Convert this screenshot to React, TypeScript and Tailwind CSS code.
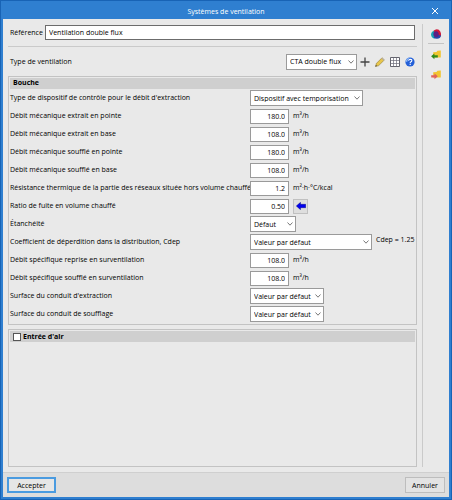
import React, { useState } from 'react';

interface FieldRow {
  id: string;
  label: string;
  kind: 'number' | 'select';
  value: string;
  unit?: string;
  width?: string;
  note?: string;
  reset?: boolean;
}

const rows: FieldRow[] = [
  { id: 'dispositif', label: "Type de dispositif de contrôle pour le débit d'extraction", kind: 'select', value: 'Dispositif avec temporisation', width: 'w-[113px]' },
  { id: 'extrait-pointe', label: 'Débit mécanique extrait en pointe', kind: 'number', value: '180.0', unit: 'm³/h' },
  { id: 'extrait-base', label: 'Débit mécanique extrait en base', kind: 'number', value: '108.0', unit: 'm³/h' },
  { id: 'souffle-pointe', label: 'Débit mécanique soufflé en pointe', kind: 'number', value: '180.0', unit: 'm³/h' },
  { id: 'souffle-base', label: 'Débit mécanique soufflé en base', kind: 'number', value: '108.0', unit: 'm³/h' },
  { id: 'resistance', label: 'Résistance thermique de la partie des réseaux située hors volume chauffé', kind: 'number', value: '1.2', unit: 'm²·h·°C/kcal' },
  { id: 'fuite', label: 'Ratio de fuite en volume chauffé', kind: 'number', value: '0.50', reset: true },
  { id: 'etancheite', label: 'Étanchéité', kind: 'select', value: 'Défaut', width: 'w-[46px]' },
  { id: 'cdep', label: 'Coefficient de déperdition dans la distribution, Cdep', kind: 'select', value: 'Valeur par défaut', width: 'w-[122px]', note: 'Cdep = 1.25' },
  { id: 'reprise', label: 'Débit spécifique reprise en surventilation', kind: 'number', value: '108.0', unit: 'm³/h' },
  { id: 'souffle', label: 'Débit spécifique soufflé en surventilation', kind: 'number', value: '108.0', unit: 'm³/h' },
  { id: 'extraction', label: "Surface du conduit d'extraction", kind: 'select', value: 'Valeur par défaut', width: 'w-[74px]' },
  { id: 'soufflage', label: 'Surface du conduit de soufflage', kind: 'select', value: 'Valeur par défaut', width: 'w-[74px]' },
];

interface SelectBoxProps {
  id: string;
  value: string;
  width?: string;
}

const SelectBox: React.FC<SelectBoxProps> = ({ id, value, width = '' }) => (
  <span className={`relative block shrink-0 ${width}`}>
    <select
      id={id}
      defaultValue={value}
      className="block h-4 w-full appearance-none border border-[#9a9a9a] bg-white pl-[3px] pr-2.5 leading-none"
    >
      <option>{value}</option>
    </select>
    <svg viewBox="0 0 6 4" className="pointer-events-none absolute right-[3px] top-1.5 h-1 w-1.5" fill="none" stroke="#555" strokeWidth="0.8">
      <path d="M0.5 0.5 3 3.2 5.5 0.5" />
    </svg>
  </span>
);

const iconButton = 'flex size-[15px] items-center justify-center';

const App: React.FC = () => {
  const [airInlet, setAirInlet] = useState(false);

  return (
    <div className="flex min-h-screen flex-col border border-[#1863b5] bg-[#2f7fd0] px-0.5 pb-0.5 font-['Open_Sans',sans-serif] text-[7px] leading-[10px] text-black">
      <header className="relative flex h-[18px] items-center justify-center text-white">
        <h1 className="pt-1">Systèmes de ventilation</h1>
        <button type="button" aria-label="Fermer" className="absolute right-2.5 top-1.5">
          <svg viewBox="0 0 8 8" className="size-2" stroke="#fff" strokeWidth="1">
            <path d="M1 1 7 7M7 1 1 7" />
          </svg>
        </button>
      </header>

      <div className="flex flex-1 bg-[#e9e9e9] pb-[5px] pl-[5px] pt-[5px]">
        <main className="flex min-w-0 flex-1 flex-col">
          <div className="flex items-center border-b border-[#cacaca] pb-1.5 pl-0.5 pr-0.5 pt-px">
            <label htmlFor="reference" className="w-[35px]">Référence</label>
            <input
              id="reference"
              defaultValue="Ventilation double flux"
              className="h-[15px] min-w-0 flex-1 border border-[#6c6c6c] bg-white px-[3px]"
            />
          </div>

          <div className="flex h-[29px] items-center pl-0.5">
            <label htmlFor="type" className="flex-1">Type de ventilation</label>
            <SelectBox id="type" value="CTA double flux" width="w-[71px]" />
            <div className="flex">
              <button type="button" aria-label="Ajouter" className={iconButton}>
                <svg viewBox="0 0 10 10" className="size-2.5" stroke="#444" strokeWidth="1.3">
                  <path d="M5 0.5V9.5M0.5 5H9.5" />
                </svg>
              </button>
              <button type="button" aria-label="Modifier" className={iconButton}>
                <svg viewBox="0 0 10 10" className="size-2.5">
                  <path d="M0.5 9.5 1.5 6.3 7 0.8 9.3 3 3.7 8.6Z" fill="#e8c64a" stroke="#8d7a35" strokeWidth="0.6" />
                  <path d="M6.3 1.5 7.2 0.5 9.5 2.8 8.6 3.7Z" fill="#b9b0a0" />
                  <path d="M0.4 9.6 0.9 7.9 2.2 9.1Z" fill="#444" />
                </svg>
              </button>
              <button type="button" aria-label="Tableau" className={iconButton}>
                <svg viewBox="0 0 10 10" className="size-2.5">
                  <path d="M0.5 0.5H9.5V9.5H0.5Z" fill="#fff" stroke="#55555f" strokeWidth="0.9" />
                  <path d="M3.5 0.5V9.5M6.5 0.5V9.5M0.5 3.5H9.5M0.5 6.5H9.5" stroke="#6c6c78" strokeWidth="0.7" />
                </svg>
              </button>
              <button type="button" aria-label="Aide" className={iconButton}>
                <svg viewBox="0 0 10 10" className="size-2.5">
                  <circle cx="5" cy="5" r="4.6" fill="#2460d8" />
                  <path d="M0.5 4.6A4.6 4.6 0 0 1 6 0.6Q2.6 1.6 2.2 5Z" fill="#8db8f5" />
                  <path d="M3.6 3.8Q3.8 2.3 5.3 2.3 7 2.4 6.8 3.8 6.6 4.7 5.3 5.3V6.2M5.2 7.1V8.1" fill="none" stroke="#fff" strokeWidth="1.1" />
                </svg>
              </button>
            </div>
          </div>

          <section className="border border-[#c3c3c3] p-px">
            <h2 className="h-[11px] bg-[#cfcfcf] pl-[3px] font-bold">Bouche</h2>
            {rows.map((row) => (
              <div key={row.id} className="flex h-[18px] items-center">
                <label htmlFor={row.id} className="w-60 shrink-0 whitespace-nowrap">{row.label}</label>
                {row.kind === 'select' ? (
                  <SelectBox id={row.id} value={row.value} width={row.width} />
                ) : (
                  <input
                    id={row.id}
                    defaultValue={row.value}
                    className="h-[15px] w-[39px] border border-[#9a9a9a] bg-white pr-[3px] text-right"
                  />
                )}
                {row.unit && <span className="pl-1">{row.unit}</span>}
                {row.note && <span className="whitespace-nowrap pb-1 pl-1">{row.note}</span>}
                {row.reset && (
                  <button type="button" aria-label="Valeur calculée" className="ml-1 flex size-[15px] items-center justify-center border border-[#c0c0c0] bg-[#dedede]">
                    <svg viewBox="0 0 10 8" className="h-2 w-2.5">
                      <path d="M0.3 4 4.5 0.3V2.3H9.7V5.7H4.5V7.7Z" fill="#0000f0" stroke="#000070" strokeWidth="0.4" />
                    </svg>
                  </button>
                )}
              </div>
            ))}
          </section>

          <section className="mt-1 flex-1 border border-[#c3c3c3] p-px">
            <h2 className="h-[11px] bg-[#cfcfcf] pl-[3px] font-bold">
              <label className="flex h-full items-center gap-0.5">
                <input
                  type="checkbox"
                  checked={airInlet}
                  onChange={(e) => setAirInlet(e.target.checked)}
                  className="size-2 appearance-none border border-[#555] bg-white checked:bg-[#2f7fd0]"
                />
                Entrée d'air
              </label>
            </h2>
          </section>
        </main>

        <aside className="ml-[5px] flex w-[27px] flex-col items-center border-l border-[#cacaca]">
          <button type="button" aria-label="Bibliothèque" className="flex h-5 w-4 items-center justify-center border-b border-[#c4c4c4]">
            <svg viewBox="0 0 10 10" className="size-2.5">
              <path d="M0 5.4Q0.2 2.6 3.4 1.4L5 5.5 3.8 9.6Q0.2 8.8 0 5.4Z" fill="#14a5b5" />
              <path d="M2.6 1.8Q5 -0.6 7.8 0.8 10.6 3 10 7.4L5 6Z" fill="#d01838" />
              <path d="M2.6 8.4 5 5.5 10 6.6Q9.4 9.8 6 9.8 3.4 9.8 2.6 8.4Z" fill="#2447ad" />
              <path d="M2.6 3.4Q4.8 1.5 7 2.9 8.8 5.2 7.2 7.6 4.8 9 2.8 7.2 2 5.2 2.6 3.4Z" fill="#5a2285" />
            </svg>
          </button>
          <button type="button" aria-label="Importer" className="flex h-[21px] w-4 items-center justify-center">
            <svg viewBox="0 0 10 10" className="size-2.5">
              <path d="M2.2 2.2 5.5 2 6.4 0.8 9.8 0.5V7.4H2.2Z" fill="#f1c530" />
              <path d="M0.1 6.3 3.4 3.4V5.2H6.8V7.4H3.4V9.3Z" fill="#2e8a18" />
            </svg>
          </button>
          <button type="button" aria-label="Exporter" className="flex h-5 w-4 items-center justify-center">
            <svg viewBox="0 0 10 10" className="size-2.5">
              <path d="M2.2 2.2 5.5 2 6.4 0.8 9.8 0.5V7.4H2.2Z" fill="#f1c530" />
              <path d="M6.8 6.3 3.5 3.4V5.2H0.2V7.4H3.5V9.3Z" fill="#e0605c" />
            </svg>
          </button>
        </aside>
      </div>

      <footer className="flex justify-between border-t border-[#cfcfcf] bg-[#dddddd] p-1">
        <button type="submit" className="h-4 w-[49px] border-2 border-[#4a9be0] bg-[#e6e6e6] leading-none">Accepter</button>
        <button type="button" className="h-4 w-10 border border-[#bdbdbd] bg-[#e3e3e3] leading-none">Annuler</button>
      </footer>
    </div>
  );
};

export default App;
